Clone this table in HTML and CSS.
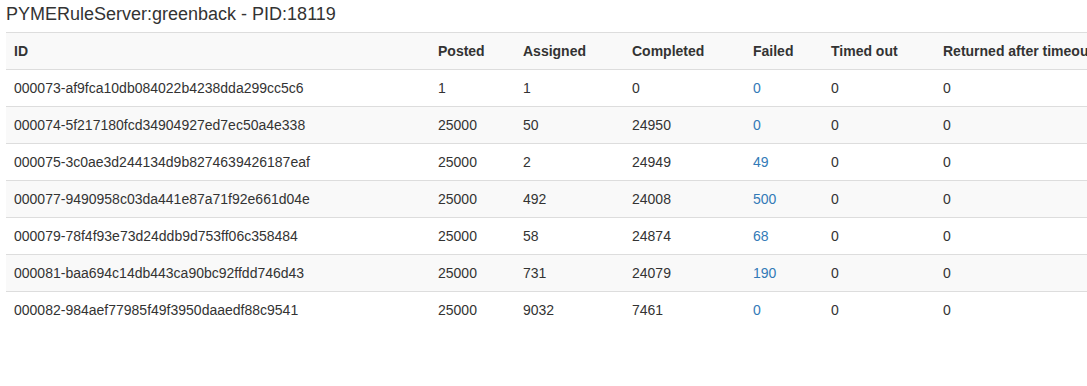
FILE: index.html
```html
<!DOCTYPE html>
<html>
<head>
<meta charset="utf-8">
<link rel="stylesheet" href="styles.css">
</head>
<body>
<div class="page">
  <h1 class="title">PYMERuleServer:greenback - PID:18119</h1>
  <table class="queues">
    <colgroup>
      <col class="c-id"><col class="c-posted"><col class="c-assigned"><col class="c-completed"><col class="c-failed"><col class="c-timed"><col class="c-returned">
    </colgroup>
    <tbody>
      <tr class="head"><th>ID</th><th>Posted</th><th>Assigned</th><th>Completed</th><th>Failed</th><th>Timed out</th><th>Returned after timeout</th></tr>
      <tr><td>000073-af9fca10db084022b4238dda299cc5c6</td><td>1</td><td>1</td><td>0</td><td><a href="#">0</a></td><td>0</td><td>0</td></tr>
      <tr><td>000074-5f217180fcd34904927ed7ec50a4e338</td><td>25000</td><td>50</td><td>24950</td><td><a href="#">0</a></td><td>0</td><td>0</td></tr>
      <tr><td>000075-3c0ae3d244134d9b8274639426187eaf</td><td>25000</td><td>2</td><td>24949</td><td><a href="#">49</a></td><td>0</td><td>0</td></tr>
      <tr><td>000077-9490958c03da441e87a71f92e661d04e</td><td>25000</td><td>492</td><td>24008</td><td><a href="#">500</a></td><td>0</td><td>0</td></tr>
      <tr><td>000079-78f4f93e73d24ddb9d753ff06c358484</td><td>25000</td><td>58</td><td>24874</td><td><a href="#">68</a></td><td>0</td><td>0</td></tr>
      <tr><td>000081-baa694c14db443ca90bc92ffdd746d43</td><td>25000</td><td>731</td><td>24079</td><td><a href="#">190</a></td><td>0</td><td>0</td></tr>
      <tr><td>000082-984aef77985f49f3950daaedf88c9541</td><td>25000</td><td>9032</td><td>7461</td><td><a href="#">0</a></td><td>0</td><td>0</td></tr>
    </tbody>
  </table>
</div>
</body>
</html>
```
FILE: styles.css
```css
html, body {
  margin: 0;
  padding: 0;
  overflow: hidden;
  background: #fff;
}
body {
  font-family: "Liberation Sans", Arial, Helvetica, sans-serif;
  font-size: 14px;
  line-height: 20px;
  color: #333;
}
.page {
  padding: 0 6px;
  width: 1140px;
}
.title {
  font-size: 18px;
  font-weight: normal;
  line-height: 20px;
  margin: 4px 0 8px;
  color: #333;
}
.queues {
  border-collapse: collapse;
  border-spacing: 0;
  table-layout: fixed;
  width: 1110px;
}
.c-id { width: 424px; }
.c-posted { width: 85px; }
.c-assigned { width: 109px; }
.c-completed { width: 121px; }
.c-failed { width: 78px; }
.c-timed { width: 112px; }
.c-returned { width: 181px; }
.queues th, .queues td {
  padding: 8px;
  text-align: left;
  vertical-align: top;
  border-top: 1px solid #ddd;
  white-space: nowrap;
  line-height: 20px;
}
.queues th {
  font-weight: bold;
}
.queues tr:nth-child(odd) {
  background: #f9f9f9;
}
.queues a {
  color: #337ab7;
  text-decoration: none;
}
```
